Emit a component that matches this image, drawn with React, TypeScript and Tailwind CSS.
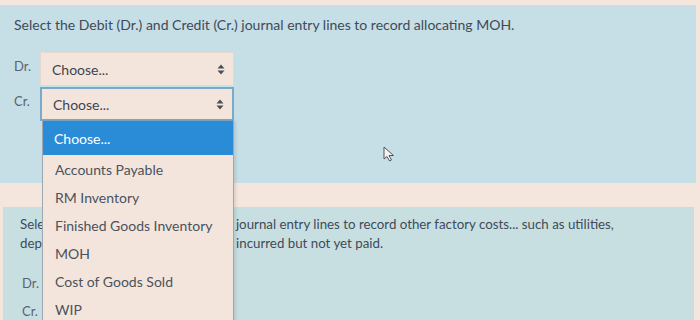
const options = [
  "Accounts Payable",
  "RM Inventory",
  "Finished Goods Inventory",
  "MOH",
  "Cost of Goods Sold",
  "WIP",
];

function Arrows() {
  return (
    <svg width="8" height="11" viewBox="0 0 8 11" className="shrink-0">
      <path d="M4 0.5 L7.5 4.5 H0.5 Z" fill="#4a4f57" />
      <path d="M4 10.5 L7.5 6.5 H0.5 Z" fill="#4a4f57" />
    </svg>
  );
}

function SelectBox({ label, focused }: { label: string; focused?: boolean }) {
  return (
    <div className="flex items-start">
      <span className="w-[40px] pl-[14px] pt-[5px] text-[13px] text-[#5b636d]">{label}</span>
      <div
        className={
          "flex h-[34px] w-[194px] items-center justify-between bg-[#f4e5dc] pl-[11px] pr-[8px] text-[14px] text-[#3c4450] " +
          (focused ? "border-2 border-[#7ba9c9]" : "border border-[#e6d8cf]")
        }
      >
        <span>Choose...</span>
        <Arrows />
      </div>
    </div>
  );
}

export default function App() {
  return (
    <div
      className="relative h-[320px] w-[700px] overflow-hidden bg-[#f5e6dd]"
      style={{ fontFamily: "Lato, 'Open Sans', sans-serif" }}
    >
      <div className="h-[5px]" />
      <div className="mr-[4px] h-[178px] bg-[#c6dee6] pt-[10px]">
        <p className="pl-[14px] text-[14px] leading-[19px] text-[#3f4a58]">
          Select the Debit (Dr.) and Credit (Cr.) journal entry lines to record allocating MOH.
        </p>
        <div className="mt-[18px] flex flex-col gap-[1px]">
          <SelectBox label="Dr." />
          <SelectBox label="Cr." focused />
        </div>
      </div>
      <div className="h-[24px]" />
      <div className="ml-[3px] mr-[6px] h-[120px] bg-[#c8dfe2] pt-[8px]">
        <p className="pl-[17px] text-[13.3px] leading-[19px] text-[#3f4a58]">
          Select the Debit (Dr.) and Credit (Cr.) journal entry lines to record other factory costs... such as utilities,
          <br />
          depreciation and property taxes, etc. incurred but not yet paid.
        </p>
        <div className="mt-[21px] flex flex-col gap-[10px] pl-[19px] text-[13px] leading-[18px] text-[#5b636d]">
          <span>Dr.</span>
          <span>Cr.</span>
        </div>
      </div>

      {/* open dropdown list */}
      <div className="absolute left-[42px] top-[121px] w-[192px] border-x border-[#9ba7b1] bg-[#f4e5dc] shadow-[2px_0_3px_rgba(0,0,0,0.1)]">
        <div className="flex h-[34px] items-center bg-[#2a8cd6] pl-[11px] text-[14px] text-white">Choose...</div>
        <div className="flex flex-col">
          {options.map((o) => (
            <div key={o} className="flex h-[28px] items-center pl-[12px] text-[14px] text-[#4a525d]">
              {o}
            </div>
          ))}
        </div>
      </div>

      {/* mouse cursor */}
      <svg className="absolute left-[383px] top-[146px]" width="12" height="16" viewBox="0 0 12 16">
        <path d="M1 1 L1 13 L4 10.5 L6.5 15 L8.5 14 L6 9.5 L10.5 9.5 Z" fill="#f4f4f4" stroke="#555" strokeWidth="1" />
      </svg>
    </div>
  );
}
